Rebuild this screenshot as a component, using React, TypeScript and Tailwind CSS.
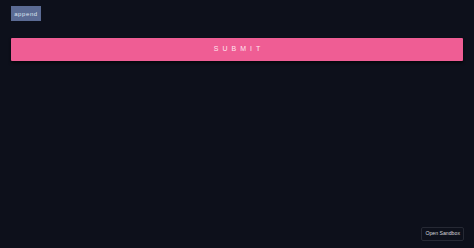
export default function App() {
  return (
    <div className="w-[474px] h-[248px] bg-[#0d101b] relative flex flex-col px-[11px] pt-[6px]" style={{ fontFamily: '"Liberation Sans", Arial, sans-serif' }}>
      <div>
        <button className="h-[15px] w-[30px] bg-[#5b6b94] text-[#dfe4f0] text-[6px] tracking-[0.6px] flex items-center justify-center leading-none">append</button>
      </div>
      <button className="mt-[17px] h-[23px] w-full bg-[#ef5d94] text-[#fde6ef] text-[7px] tracking-[4px] flex items-center justify-center rounded-[1px] shadow-[0_2px_3px_rgba(0,0,0,0.6)]"><span className="mr-[-4px]">SUBMIT</span></button>
      <div className="absolute right-[10px] bottom-[7px] h-[14px] px-[3px] flex items-center border border-[#262934] rounded-[2px] bg-[#0d101b] text-[#d6d8dd] text-[5.2px] leading-none">Open Sandbox</div>
    </div>
  );
}
